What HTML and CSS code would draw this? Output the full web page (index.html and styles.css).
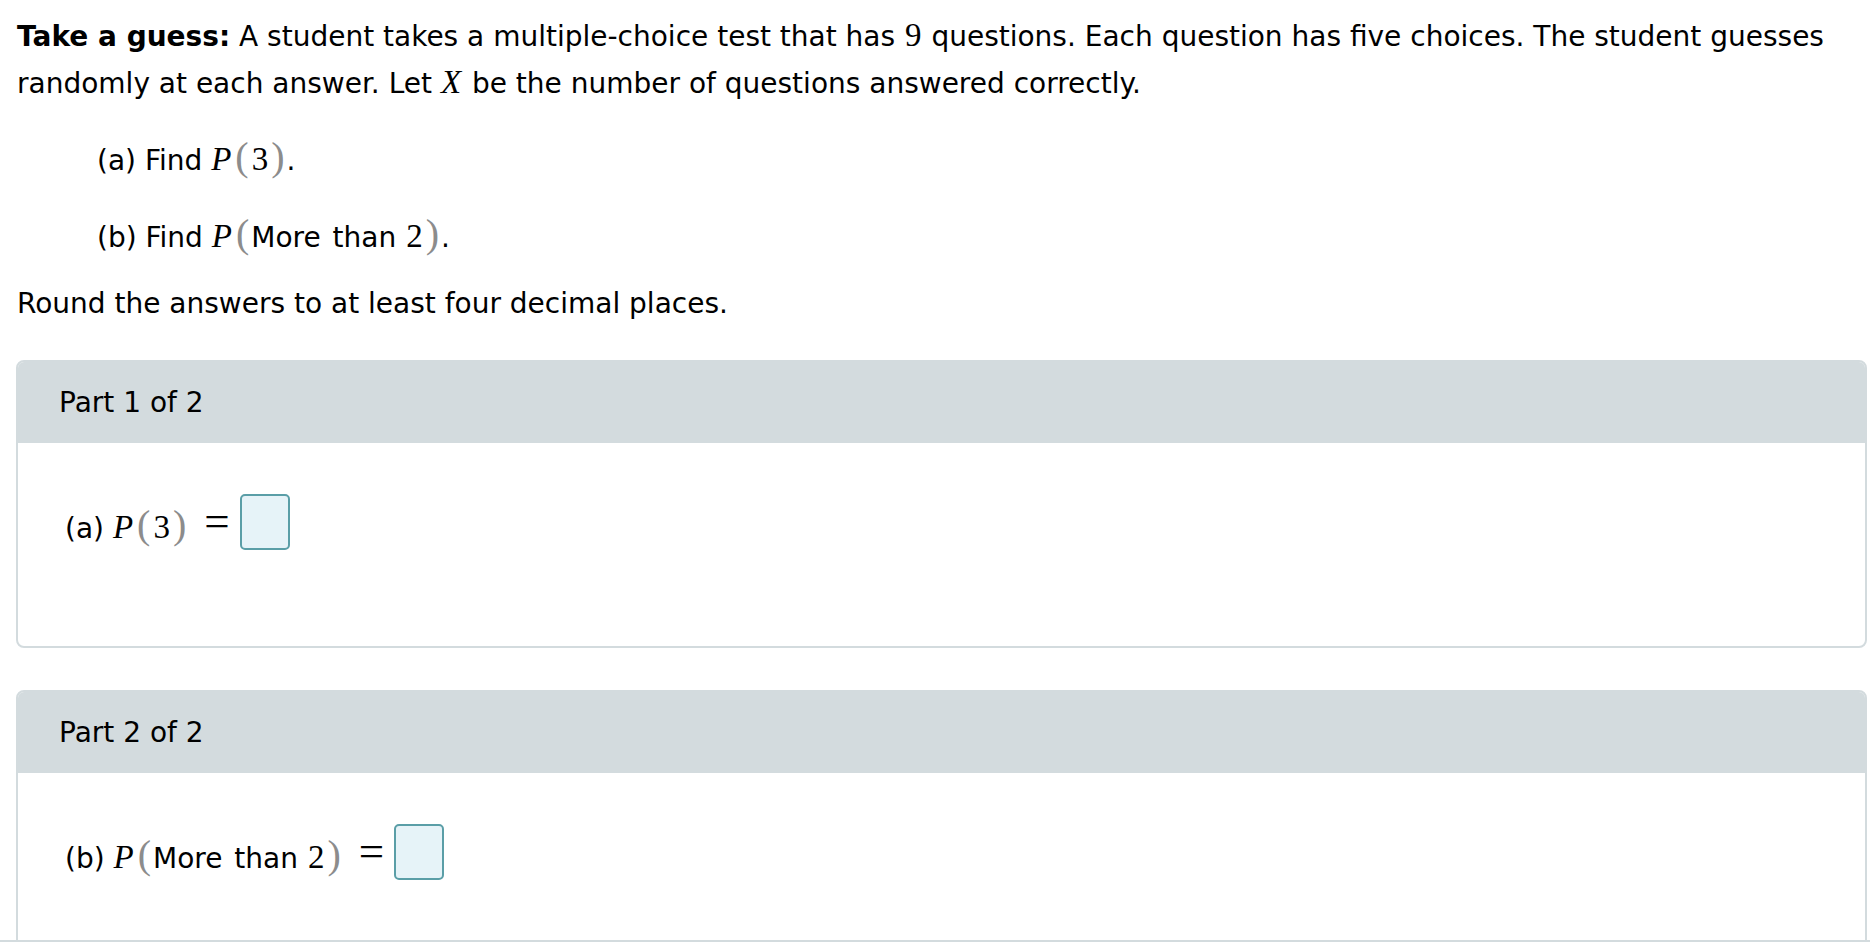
FILE: index.html
```html
<!DOCTYPE html>
<html lang="en">
<head>
    <meta charset="UTF-8">
    <meta name="viewport" content="width=device-width, initial-scale=1.0">
    <title>Take a guess</title>
    <link rel="stylesheet" href="styles.css">
</head>
<body>
    <div class="page">
        <p class="intro"><b>Take a guess:</b> A student takes a multiple-choice test that has <span class="mn">9</span> questions. Each question has five choices. The student guesses randomly at each answer. Let <span class="mi">X</span> be the number of questions answered correctly.</p>

        <p class="item">(a) Find <span class="mi">P</span><span class="paren">(</span><span class="mn">3</span><span class="paren">)</span>.</p>
        <p class="item">(b) Find <span class="mi">P</span><span class="paren">(</span><span class="mtext">More than</span><span class="mn">2</span><span class="paren">)</span>.</p>

        <p class="note">Round the answers to at least four decimal places.</p>

        <section class="part">
            <div class="part-head">Part 1 of 2</div>
            <div class="part-body">
                <div class="answer">(a) <span class="mi">P</span><span class="paren">(</span><span class="mn">3</span><span class="paren">)</span><span class="eq">=</span><span class="input-box"></span></div>
            </div>
        </section>

        <section class="part">
            <div class="part-head">Part 2 of 2</div>
            <div class="part-body">
                <div class="answer">(b) <span class="mi">P</span><span class="paren">(</span><span class="mtext">More than</span><span class="mn">2</span><span class="paren">)</span><span class="eq">=</span><span class="input-box"></span></div>
            </div>
        </section>
    </div>
</body>
</html>
```

FILE: styles.css
```css
body {
    margin: 0;
    font-family: "DejaVu Sans", Verdana, sans-serif;
    font-size: 28px;
    color: #000;
    background-color: #fff;
    height: 942px;
    box-sizing: border-box;
    border-bottom: 2px solid #d3dbde;
    overflow: hidden;
}

.page {
    padding: 13px 3px 0 17px;
}

p {
    margin: 0;
}

.intro {
    line-height: 47px;
}

.item {
    line-height: 47px;
    margin-top: 30px;
    padding-left: 80px;
}

.note {
    line-height: 47px;
    margin-top: 19px;
}

/* math bits */
.mi,
.mn,
.paren,
.eq {
    font-family: "Liberation Serif", "Times New Roman", serif;
    line-height: 0;
}

.mi {
    font-style: italic;
    font-size: 33px;
    padding-right: 2px;
}

.mn {
    font-size: 33px;
    padding: 0 1px;
}

.mtext {
    word-spacing: 3px;
    padding-right: 9px;
}

.paren {
    font-size: 40px;
    color: #8c8c8c;
    padding: 0 2px;
}

.eq {
    font-size: 45px;
    margin: 0 10px 0 16px;
    position: relative;
    top: -2px;
}

/* parts */
.part {
    border: 2px solid #d3dbde;
    border-radius: 8px;
    margin: 33px 0 0 -1px;
    overflow: hidden;
}

.part + .part {
    margin-top: 42px;
}

.part-head {
    background-color: #d3dbde;
    padding: 26px 41px 25px;
    line-height: 30px;
}

.part-body {
    padding: 51px 47px 96px;
}

.answer {
    line-height: 30px;
}

.input-box {
    display: inline-block;
    width: 50px;
    height: 56px;
    box-sizing: border-box;
    border: 2px solid #5a9ea7;
    border-radius: 5px;
    background-color: #e6f3f8;
    vertical-align: -12px;
}
```
